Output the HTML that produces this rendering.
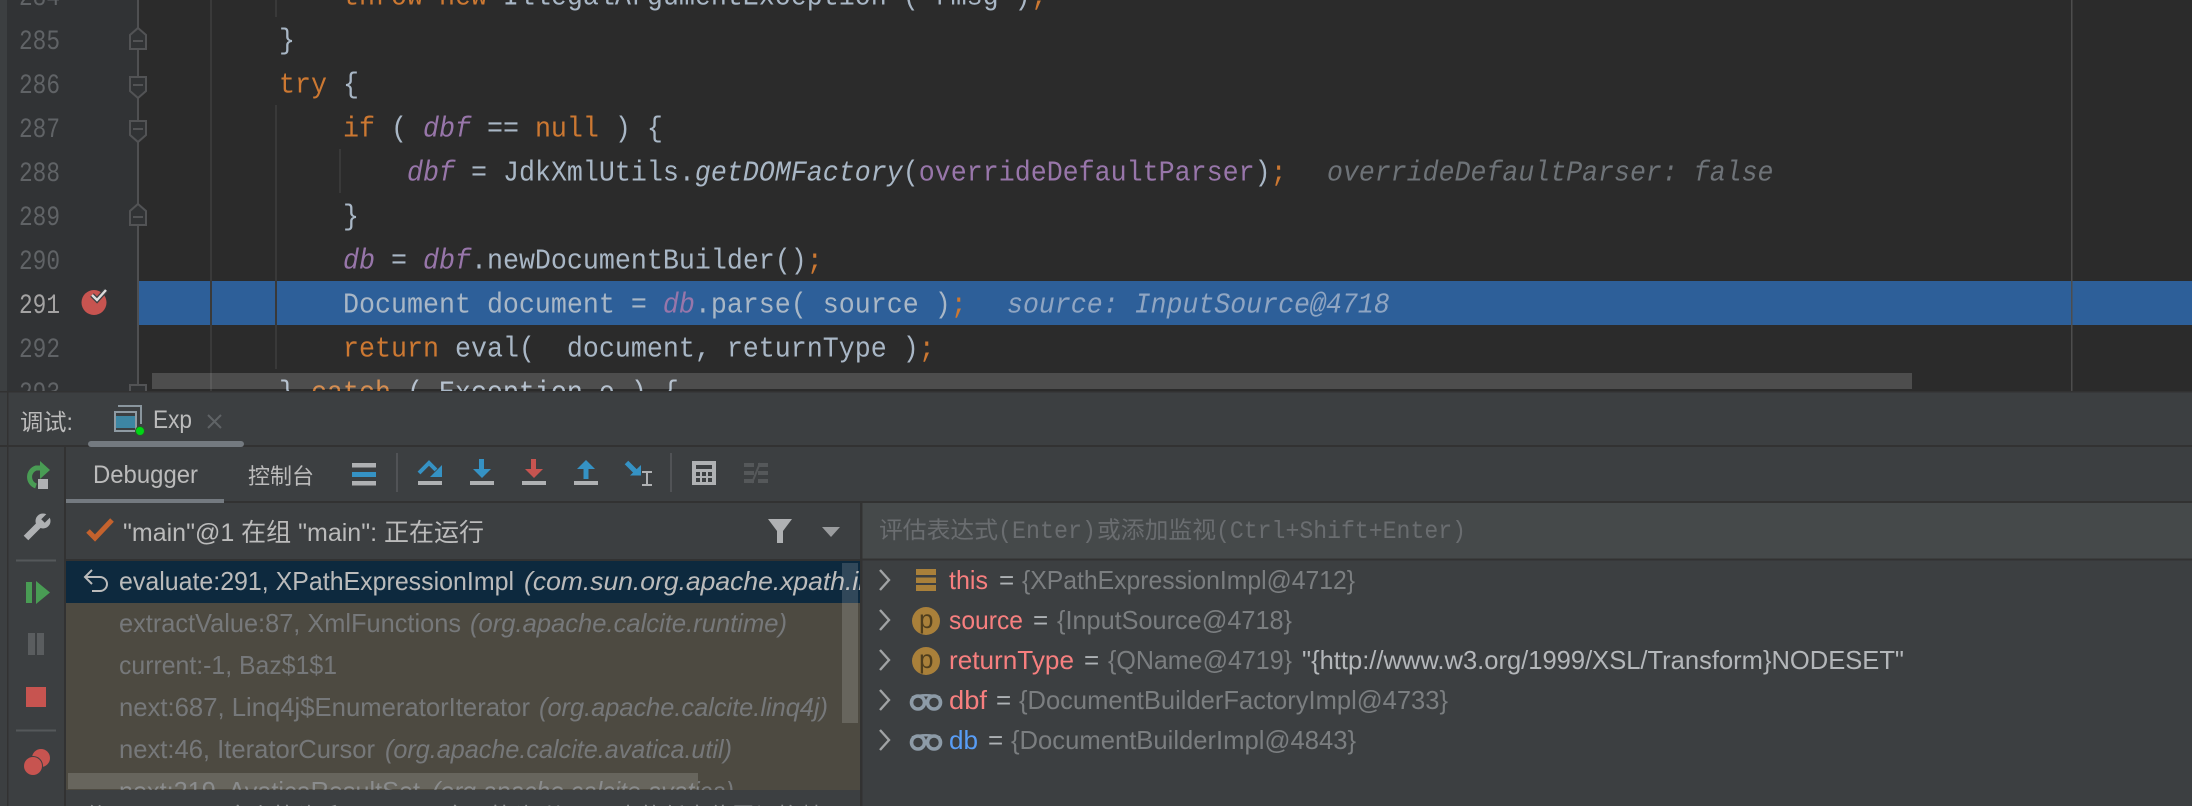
<!DOCTYPE html>
<html><head><meta charset="utf-8"><title>Debugger</title>
<style>
html,body{margin:0;padding:0;background:#3c3f41;width:2192px;height:806px;overflow:hidden}
svg{display:block}
text{white-space:pre}
.m{font-family:"Liberation Mono","Noto Sans CJK SC",monospace;font-size:28.5px;fill:#a9b7c6}
.k{fill:#cc7832}.f{fill:#9876aa;font-style:italic}.p{fill:#9876aa}.i{font-style:italic}
.h{font-style:italic;fill:#6e7378;font-size:28.4px}
.n{font-family:"Liberation Mono",monospace;font-size:28px;fill:#606366}
.s{font-family:"Liberation Sans","Noto Sans CJK SC",sans-serif;font-size:26px;fill:#bbbbbb}
.g{fill:#76787a}.it{font-style:italic}
.r{fill:#f77f7f}.v{fill:#7b7e80}.e{fill:#aeb2b5}
.ph{font-family:"Liberation Mono","Noto Sans CJK SC",monospace;font-size:25px;fill:#6a6d70}
</style></head><body>
<svg xmlns="http://www.w3.org/2000/svg" width="2192" height="806" viewBox="0 0 2192 806">
<defs>
<clipPath id="ed"><rect x="0" y="0" width="2192" height="391"/></clipPath>
<clipPath id="fr"><rect x="66" y="561" width="794" height="229"/></clipPath>
<clipPath id="bt"><rect x="66" y="790" width="794" height="16"/></clipPath>
</defs>
<rect width="2192" height="806" fill="#3c3f41"/>
<!-- editor -->
<g clip-path="url(#ed)">
<rect x="7" y="0" width="2185" height="392" fill="#2b2b2b"/>
<rect x="7" y="0" width="132" height="392" fill="#313335"/>
<rect x="139" y="281" width="2053" height="44" fill="#2d5f99"/>
<rect x="210" y="0" width="2" height="392" fill="#3a3a3a"/>
<rect x="2071" y="0" width="1.5" height="392" fill="#4d4d4d"/>
<rect x="275" y="0" width="2" height="17" fill="#393939"/>
<rect x="275" y="105" width="2" height="264" fill="#393939"/>
<rect x="339" y="149" width="2" height="44" fill="#393939"/>
<!-- fold line -->
<rect x="137" y="0" width="2" height="392" fill="#4f5052"/>
<g fill="#313335" stroke="#525355" stroke-width="2">
<path d="M138 28 L146 35 V49 H130 V35 Z"/>
<path d="M138 204 L146 211 V225 H130 V211 Z"/>
<path d="M130 77 H146 V91 L138 98 L130 91 Z"/>
<path d="M130 121 H146 V135 L138 142 L130 135 Z"/>
<path d="M130 385 H146 V399 H130 Z"/>
</g>
<g fill="#525355">
<rect x="133" y="40" width="10" height="2"/><rect x="133" y="84" width="10" height="2"/>
<rect x="133" y="128" width="10" height="2"/><rect x="133" y="216" width="10" height="2"/>
</g>
<!-- line numbers -->
<text class="n" x="19" y="49" textLength="41" lengthAdjust="spacingAndGlyphs">285</text>
<text class="n" x="19" y="93" textLength="41" lengthAdjust="spacingAndGlyphs">286</text>
<text class="n" x="19" y="137" textLength="41" lengthAdjust="spacingAndGlyphs">287</text>
<text class="n" x="19" y="181" textLength="41" lengthAdjust="spacingAndGlyphs">288</text>
<text class="n" x="19" y="225" textLength="41" lengthAdjust="spacingAndGlyphs">289</text>
<text class="n" x="19" y="269" textLength="41" lengthAdjust="spacingAndGlyphs">290</text>
<text class="n" x="19" y="313" textLength="41" lengthAdjust="spacingAndGlyphs" style="fill:#a4a3a3">291</text>
<text class="n" x="19" y="357" textLength="41" lengthAdjust="spacingAndGlyphs">292</text>
<text class="n" x="19" y="401" textLength="41" lengthAdjust="spacingAndGlyphs">293</text>
<text class="n" x="19" y="5" textLength="41" lengthAdjust="spacingAndGlyphs">284</text>
<!-- breakpoint -->
<circle cx="94" cy="302.5" r="12.5" fill="#c75450"/>
<path d="M92 295 L97 300 L106 290" fill="none" stroke="#3c3f41" stroke-width="5"/>
<path d="M92 295 L97 300 L106 290" fill="none" stroke="#dcdcdc" stroke-width="2.4"/>
<!-- code -->
<g transform="translate(0 -0.5) scale(.9357 1)">
<text class="m" x="366.6" y="5"><tspan class="k">throw new</tspan> IllegalArgumentException ( rmsg )<tspan class="k">;</tspan></text>
<text class="m" x="298.2" y="49">}</text>
<text class="m" x="298.2" y="93"><tspan class="k">try</tspan> {</text>
<text class="m" x="366.6" y="137"><tspan class="k">if</tspan> ( <tspan class="f">dbf</tspan> == <tspan class="k">null</tspan> ) {</text>
<text class="m" x="435" y="181"><tspan class="f">dbf</tspan> = JdkXmlUtils.<tspan class="i">getDOMFactory</tspan>(<tspan class="p">overrideDefaultParser</tspan>)<tspan class="k">;</tspan></text>
<text class="m h" x="1418.2" y="181">overrideDefaultParser: false</text>
<text class="m" x="366.6" y="225">}</text>
<text class="m" x="366.6" y="269"><tspan class="f">db</tspan> = <tspan class="f">dbf</tspan>.newDocumentBuilder()<tspan class="k">;</tspan></text>
<text class="m" x="366.6" y="313">Document document = <tspan class="f">db</tspan>.parse( source )<tspan class="k">;</tspan></text>
<text class="m h" x="1076.2" y="313" style="fill:#8fa5c2">source: InputSource@4718</text>
<text class="m" x="366.6" y="357"><tspan class="k">return</tspan> eval(  document, returnType )<tspan class="k">;</tspan></text>
<text class="m" x="298.2" y="401">} <tspan class="k">catch</tspan> ( Exception e ) {</text>
</g>
<rect x="152" y="373" width="1760" height="16" fill="#ffffff" fill-opacity=".165"/>
</g>
<!-- tool window header -->
<rect x="0" y="391" width="2192" height="1.5" fill="#323232"/>
<text class="s" x="20" y="430" textLength="53" lengthAdjust="spacingAndGlyphs" style="font-size:23px">调试:</text>
<!-- Exp icon -->
<path d="M118 406 H141 V424" fill="none" stroke="#8a969e" stroke-width="2"/>
<rect x="115" y="412" width="21" height="19" fill="#3c3f41" stroke="#8f9ba3" stroke-width="2"/>
<rect x="116" y="416" width="19" height="12" fill="#3d86a3"/>
<circle cx="140" cy="431" r="4.5" fill="#00d515" stroke="#2b5a2b" stroke-width="1"/>
<text class="s" x="153" y="428" textLength="39" lengthAdjust="spacingAndGlyphs" style="font-size:25px">Exp</text>
<path d="M208 415 L221 428 M221 415 L208 428" stroke="#5f6366" stroke-width="2"/>
<rect x="0" y="445" width="2192" height="2" fill="#323232"/>
<rect x="88" y="441" width="156" height="6" rx="3" fill="#747a80"/>
<rect x="7" y="392" width="1.5" height="414" fill="#323232"/>
<!-- left toolbar -->
<rect x="64" y="447" width="2" height="359" fill="#323232"/>
<path d="M36 486 A9.5 9.5 0 0 1 36 468 H42" fill="none" stroke="#499c54" stroke-width="5"/>
<polygon points="40,461 50,470 40,479" fill="#499c54"/>
<rect x="38" y="479" width="10" height="10" fill="#afb1b3"/>
<path d="M26 538 L42 522" stroke="#afb1b3" stroke-width="6.5"/>
<circle cx="43" cy="521" r="7.5" fill="#afb1b3"/>
<path d="M43 521 L51 513" stroke="#3c3f41" stroke-width="5"/>
<rect x="16" y="559.5" width="40" height="2" fill="#55585a"/>
<rect x="26" y="582" width="6" height="21" fill="#499c54"/>
<polygon points="36,581 50,592.5 36,604" fill="#499c54"/>
<rect x="28" y="633" width="7" height="22" fill="#5a5d5f"/><rect x="37" y="633" width="7" height="22" fill="#5a5d5f"/>
<rect x="26" y="687" width="20" height="20" fill="#c75450"/>
<rect x="16" y="729.5" width="40" height="2" fill="#55585a"/>
<circle cx="41" cy="758" r="9" fill="#c75450"/>
<circle cx="33" cy="766" r="10" fill="#3c3f41"/>
<circle cx="33" cy="766" r="9" fill="#c75450"/>
<!-- debugger toolbar -->
<text class="s" x="93" y="483" textLength="105" lengthAdjust="spacingAndGlyphs" style="font-size:25px">Debugger</text>
<text class="s" x="248" y="484" textLength="66" lengthAdjust="spacingAndGlyphs" style="font-size:22px">控制台</text>
<rect x="66" y="501" width="2126" height="2" fill="#323232"/>
<rect x="66" y="499" width="158" height="4" fill="#747a80"/>
<rect x="352" y="463" width="24" height="4.5" fill="#afb1b3"/>
<rect x="352" y="472" width="24" height="5" fill="#3592c4"/>
<rect x="352" y="481" width="24" height="4.5" fill="#afb1b3"/>
<rect x="396" y="453" width="2" height="39" fill="#515356"/>
<!-- step over -->
<path d="M419 473 L429 463 L436 470" fill="none" stroke="#3592c4" stroke-width="4"/>
<polygon points="442,465 442,477 430,477" fill="#3592c4"/>
<rect x="418" y="481" width="24" height="4" fill="#afb1b3"/>
<!-- step into -->
<rect x="479" y="459" width="5" height="11" fill="#3592c4"/>
<polygon points="473,469 491,469 482,478" fill="#3592c4"/>
<rect x="470" y="481" width="24" height="4" fill="#afb1b3"/>
<!-- force step into -->
<rect x="531" y="459" width="5" height="11" fill="#c75450"/>
<polygon points="525,469 543,469 534,478" fill="#c75450"/>
<rect x="522" y="481" width="24" height="4" fill="#afb1b3"/>
<!-- step out -->
<polygon points="586,460 595,469 577,469" fill="#3592c4"/>
<rect x="583.5" y="469" width="5" height="10" fill="#3592c4"/>
<rect x="574" y="481" width="24" height="4" fill="#afb1b3"/>
<!-- run to cursor -->
<path d="M626.5 462.5 L636 472" stroke="#3592c4" stroke-width="5" fill="none"/>
<polygon points="641,465 641,475.5 630,475.5" fill="#3592c4"/>
<path d="M642 472 H652 M647 472 V485 M642 485 H652" stroke="#afb1b3" stroke-width="2" fill="none"/>
<rect x="670" y="453" width="2" height="39" fill="#515356"/>
<!-- evaluate -->
<rect x="692" y="461" width="24" height="24" fill="#afb1b3"/>
<rect x="696" y="465" width="16" height="4" fill="#3c3f41"/>
<g fill="#3c3f41"><rect x="696" y="472" width="4" height="4"/><rect x="702" y="472" width="4" height="4"/><rect x="708" y="472" width="4" height="4"/><rect x="696" y="478" width="4" height="4"/><rect x="702" y="478" width="4" height="4"/><rect x="708" y="478" width="4" height="4"/></g>
<!-- trace -->
<g fill="#55585a"><rect x="744" y="463" width="10" height="4"/><rect x="758" y="463" width="10" height="4"/><rect x="744" y="471" width="10" height="4"/><rect x="758" y="471" width="10" height="4"/><rect x="744" y="479" width="10" height="4"/><rect x="758" y="479" width="10" height="4"/></g>
<path d="M760 463 L752 483" stroke="#55585a" stroke-width="2"/>
<!-- threads row -->
<path d="M88 531 L95 538 L112 520" fill="none" stroke="#c4622d" stroke-width="5"/>
<text class="s" x="123" y="541" textLength="361" lengthAdjust="spacingAndGlyphs" style="font-size:25px">"main"@1 在组 "main": 正在运行</text>
<polygon points="768,519 792,519 783,531 783,543 777,543 777,531" fill="#afb1b3"/>
<polygon points="822,527 840,527 831,537" fill="#9a9c9e"/>
<rect x="66" y="559" width="795" height="2" fill="#323232"/>
<!-- frames -->
<rect x="66" y="603" width="794" height="187" fill="#4d4a41"/>
<rect x="66" y="561" width="794" height="42" fill="#0d293e"/>
<path d="M92 570 L85 577 L92 584 M85 577 H100 A7 7 0 0 1 100 591 H92" fill="none" stroke="#bbbbbb" stroke-width="2"/>
<g clip-path="url(#fr)">
<text class="s" x="119" y="590" textLength="395" lengthAdjust="spacingAndGlyphs">evaluate:291, XPathExpressionImpl</text>
<text class="s it" x="524" y="590" textLength="480" lengthAdjust="spacingAndGlyphs">(com.sun.org.apache.xpath.internal.jaxp)</text>
<text class="s g" x="119" y="632" textLength="342" lengthAdjust="spacingAndGlyphs">extractValue:87, XmlFunctions</text>
<text class="s g it" x="470" y="632" textLength="317" lengthAdjust="spacingAndGlyphs">(org.apache.calcite.runtime)</text>
<text class="s g" x="119" y="674" textLength="218" lengthAdjust="spacingAndGlyphs">current:-1, Baz$1$1</text>
<text class="s g" x="119" y="716" textLength="411" lengthAdjust="spacingAndGlyphs">next:687, Linq4j$EnumeratorIterator</text>
<text class="s g it" x="539" y="716" textLength="289" lengthAdjust="spacingAndGlyphs">(org.apache.calcite.linq4j)</text>
<text class="s g" x="119" y="758" textLength="256" lengthAdjust="spacingAndGlyphs">next:46, IteratorCursor</text>
<text class="s g it" x="385" y="758" textLength="347" lengthAdjust="spacingAndGlyphs">(org.apache.calcite.avatica.util)</text>
<text class="s g" x="119" y="800" textLength="301" lengthAdjust="spacingAndGlyphs">next:219, AvaticaResultSet</text>
<text class="s g it" x="432" y="800" textLength="302" lengthAdjust="spacingAndGlyphs">(org.apache.calcite.avatica)</text>
</g>
<rect x="842" y="563" width="16" height="160" fill="#ffffff" fill-opacity=".15"/>
<rect x="68" y="773" width="630" height="16" fill="#ffffff" fill-opacity=".15"/>
<g clip-path="url(#bt)">
<text class="s" x="85" y="824" style="font-size:23px;fill:#8a8c8e">使用 Ctrl+Alt+向上箭头 和 Ctrl+Alt+向下箭头 从 IDE 中的任意位置切换帧</text>
</g>
<!-- divider -->
<rect x="860" y="503" width="2.5" height="303" fill="#323232"/>
<!-- expression field -->
<rect x="862.5" y="503" width="1330" height="55.5" fill="#45494a"/>
<rect x="862.5" y="558.5" width="1330" height="2" fill="#323232"/>
<text class="ph" x="879" y="538" textLength="119" lengthAdjust="spacingAndGlyphs" style="font-size:23.5px">评估表达式</text>
<text class="ph" x="998" y="538" textLength="98" lengthAdjust="spacingAndGlyphs">(Enter)</text>
<text class="ph" x="1097" y="538" textLength="119" lengthAdjust="spacingAndGlyphs" style="font-size:23.5px">或添加监视</text>
<text class="ph" x="1216" y="538" textLength="250" lengthAdjust="spacingAndGlyphs">(Ctrl+Shift+Enter)</text>
<!-- variables -->
<g fill="none" stroke="#a0a3a5" stroke-width="2.4">
<path d="M880 570 L889 580 L880 590"/>
<path d="M880 610 L889 620 L880 630"/>
<path d="M880 650 L889 660 L880 670"/>
<path d="M880 690 L889 700 L880 710"/>
<path d="M880 730 L889 740 L880 750"/>
</g>
<g fill="#a9803a"><rect x="916" y="569" width="20" height="6"/><rect x="916" y="577.5" width="20" height="5.5"/><rect x="916" y="585" width="20" height="6"/></g>
<circle cx="926" cy="621" r="14" fill="#a9803a"/>
<circle cx="926" cy="661" r="14" fill="#a9803a"/>
<text class="s" x="919" y="628" style="font-size:26px;fill:#4f3e1e">p</text>
<text class="s" x="919" y="668" style="font-size:26px;fill:#4f3e1e">p</text>
<g fill="none" stroke="#8d9ba7" stroke-width="3.6">
<circle cx="918" cy="702.5" r="6.5"/><circle cx="934" cy="702.5" r="6.5"/><path d="M912 697.5 Q926 693 940 697.5" stroke-width="2.6"/>
<circle cx="918" cy="742.5" r="6.5"/><circle cx="934" cy="742.5" r="6.5"/><path d="M912 737.5 Q926 733 940 737.5" stroke-width="2.6"/>
</g>
<text class="s r" x="949" y="589" textLength="39" lengthAdjust="spacingAndGlyphs">this</text>
<text class="s e" x="999" y="589">=</text>
<text class="s v" x="1022" y="589" textLength="333" lengthAdjust="spacingAndGlyphs">{XPathExpressionImpl@4712}</text>
<text class="s r" x="949" y="629" textLength="74" lengthAdjust="spacingAndGlyphs">source</text>
<text class="s e" x="1033" y="629">=</text>
<text class="s v" x="1057" y="629" textLength="235" lengthAdjust="spacingAndGlyphs">{InputSource@4718}</text>
<text class="s r" x="949" y="669" textLength="125" lengthAdjust="spacingAndGlyphs">returnType</text>
<text class="s e" x="1084" y="669">=</text>
<text class="s v" x="1108" y="669" textLength="184" lengthAdjust="spacingAndGlyphs">{QName@4719}</text>
<text class="s" x="1302" y="669" textLength="602" lengthAdjust="spacingAndGlyphs" style="fill:#b4b7ba">"{http://www.w3.org/1999/XSL/Transform}NODESET"</text>
<text class="s r" x="949" y="709" textLength="38" lengthAdjust="spacingAndGlyphs">dbf</text>
<text class="s e" x="996" y="709">=</text>
<text class="s v" x="1019" y="709" textLength="429" lengthAdjust="spacingAndGlyphs">{DocumentBuilderFactoryImpl@4733}</text>
<text class="s" x="949" y="749" textLength="29" lengthAdjust="spacingAndGlyphs" style="fill:#589df6">db</text>
<text class="s e" x="988" y="749">=</text>
<text class="s v" x="1011" y="749" textLength="345" lengthAdjust="spacingAndGlyphs">{DocumentBuilderImpl@4843}</text>
</svg>
</body></html>
